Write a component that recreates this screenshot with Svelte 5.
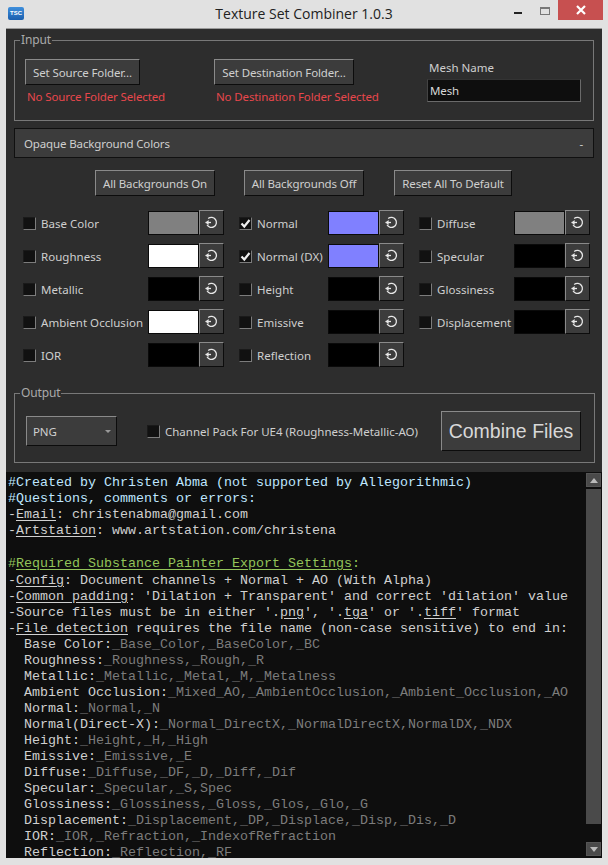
<script>
  const rows = [
    [["Base Color", false, "#808080"], ["Normal", true, "#8080ff"], ["Diffuse", false, "#808080"]],
    [["Roughness", false, "#ffffff"], ["Normal (DX)", true, "#8080ff"], ["Specular", false, "#000000"]],
    [["Metallic", false, "#000000"], ["Height", false, "#000000"], ["Glossiness", false, "#000000"]],
    [["Ambient Occlusion", false, "#ffffff"], ["Emissive", false, "#000000"], ["Displacement", false, "#000000"]],
    [["IOR", false, "#000000"], ["Reflection", false, "#000000"]]
  ];
  const cells = rows.flat();
  const suffixes = [
    ["Base Color:", "_Base_Color,_BaseColor,_BC"],
    ["Roughness:", "_Roughness,_Rough,_R"],
    ["Metallic:", "_Metallic,_Metal,_M,_Metalness"],
    ["Ambient Occlusion:", "_Mixed_AO,_AmbientOcclusion,_Ambient_Occlusion,_AO"],
    ["Normal:", "_Normal,_N"],
    ["Normal(Direct-X):", "_Normal_DirectX,_NormalDirectX,NormalDX,_NDX"],
    ["Height:", "_Height,_H,_High"],
    ["Emissive:", "_Emissive,_E"],
    ["Diffuse:", "_Diffuse,_DF,_D,_Diff,_Dif"],
    ["Specular:", "_Specular,_S,Spec"],
    ["Glossiness:", "_Glossiness,_Gloss,_Glos,_Glo,_G"],
    ["Displacement:", "_Displacement,_DP,_Displace,_Disp,_Dis,_D"],
    ["IOR:", "_IOR,_Refraction,_IndexofRefraction"],
    ["Reflection:", "_Reflection,_RF"]
  ];
</script>

<div class="window">
  <header class="titlebar">
    <div class="appicon">TSC</div>
    <div class="title">Texture Set Combiner 1.0.3</div>
    <div class="controls">
      <span class="min"></span>
      <span class="max"></span>
      <span class="close">
        <svg width="12" height="12" viewBox="0 0 12 12"><path d="M2 2 L10 10 M10 2 L2 10" stroke="#fff" stroke-width="2.2" fill="none"/></svg>
      </span>
    </div>
  </header>

  <main class="client">
    <div class="panel">
      <fieldset class="group input-group">
        <legend>Input</legend>
        <div class="folder source">
          <button class="btn">Set Source Folder...</button>
          <div class="err">No Source Folder Selected</div>
        </div>
        <div class="folder dest">
          <button class="btn">Set Destination Folder...</button>
          <div class="err">No Destination Folder Selected</div>
        </div>
        <div class="mesh">
          <div class="mesh-label">Mesh Name</div>
          <div class="text-input">Mesh</div>
        </div>
      </fieldset>

      <div class="collapse"><span>Opaque Background Colors</span><span>-</span></div>

      <div class="bulk">
        <button class="btn">All Backgrounds On</button>
        <button class="btn">All Backgrounds Off</button>
        <button class="btn">Reset All To Default</button>
      </div>

      <div class="grid">
        {#each cells as c}
          <div class="cell">
            <span class="check">
              {#if c[1]}
                <svg width="11" height="11" viewBox="0 0 11 11"><path d="M1.5 5.5 L4.3 8.5 L9.5 2" stroke="#f0f0f0" stroke-width="2.2" fill="none"/></svg>
              {/if}
            </span>
            <span class="cell-label">{c[0]}</span>
            <span class="swatch" style="background:{c[2]}"></span>
            <span class="reset">
              <svg width="15" height="15" viewBox="0 0 15 15"><path d="M4.2 3.6 A5 5 0 1 1 3 9.8" stroke="#e8e8e8" stroke-width="1.3" fill="none"/><path d="M1.6 7.5 H7" stroke="#e8e8e8" stroke-width="1.3" fill="none"/><path d="M1.4 7.5 L4.6 5 V10 Z" fill="#e8e8e8"/></svg>
            </span>
          </div>
        {/each}
      </div>

      <fieldset class="group output-group">
        <legend>Output</legend>
        <div class="combo"><span>PNG</span><span class="arrow"></span></div>
        <span class="check pack"></span>
        <span class="pack-label">Channel Pack For UE4 (Roughness-Metallic-AO)</span>
        <button class="btn combine">Combine Files</button>
      </fieldset>
    </div>

    <section class="log">
      <div class="log-text">
        <div class="line blue">#Created by Christen Abma (not supported by Allegorithmic)</div>
        <div class="line blue">#Questions, comments or errors:</div>
        <div class="line">-<u>Email</u>: christenabma@gmail.com</div>
        <div class="line">-<u>Artstation</u>: www.artstation.com/christena</div>
        <div class="line">&nbsp;</div>
        <div class="line green">#<u>Required Substance Painter Export Settings</u>:</div>
        <div class="line">-<u>Config</u>: Document channels + Normal + AO (With Alpha)</div>
        <div class="line">-<u>Common padding</u>: 'Dilation + Transparent' and correct 'dilation' value</div>
        <div class="line">-Source files must be in either '.<u>png</u>', '.<u>tga</u>' or '.<u>tiff</u>' format</div>
        <div class="line">-<u>File detection</u> requires the file name (non-case sensitive) to end in:</div>
        {#each suffixes as s}
          <div class="line">&nbsp;&nbsp;{s[0]}<span class="gray">{s[1]}</span></div>
        {/each}
      </div>
      <div class="scrollbar">
        <span class="sb-btn"><i class="up"></i></span>
        <span class="thumb"></span>
        <span class="sb-btn"><i class="down"></i></span>
      </div>
    </section>
  </main>
</div>

<style>
  :global(body) { margin: 0; background: #e0e0e0; }
  .window {
    width: 608px; height: 865px; box-sizing: border-box; overflow: hidden;
    background: #e1e1e1; padding: 0 6px 7px;
    display: flex; flex-direction: column;
    font-family: "Noto Sans", "Open Sans", sans-serif; font-size: 11.5px; letter-spacing: -0.13px; color: #cfcfcf;
  }
  .titlebar { height: 29px; flex: none; display: flex; align-items: flex-start; position: relative; box-sizing: border-box; border-bottom: 1px solid #9a9a9a; }
  .appicon {
    width: 16px; height: 13px; margin: 7px 0 0 2px; border-radius: 2px;
    background: linear-gradient(#3f8fdc, #1a5fae); color: #fff; letter-spacing: 0;
    font: bold 6px "Liberation Sans", sans-serif; line-height: 13px; text-align: center;
  }
  .title {
    position: absolute; left: 0; right: 0; top: 4px; text-align: center;
    font-family: "Open Sans", sans-serif; font-size: 14px; letter-spacing: 0; color: #222; line-height: 20px;
  }
  .controls { margin-left: auto; display: flex; align-items: flex-start; position: relative; }
  .min { width: 8px; height: 2px; background: #222; margin: 12px 18px 0 0; }
  .max { width: 8px; height: 5px; border: 1px solid #777; border-top-width: 2px; margin: 7px 8px 0 0; }
  .close { width: 45px; height: 20px; background: #c75050; display: flex; align-items: center; justify-content: center; margin-right: -1px; }

  .client { flex: 1; min-height: 0; display: flex; flex-direction: column; background: #2d2d2d; }
  .panel { flex: none; height: 443px; box-sizing: border-box; padding: 0 7px 0 8px; display: flex; flex-direction: column; }

  .group { margin: 0; border: 1px solid #787878; box-sizing: border-box; position: relative; padding: 0; display: flex; min-width: 0; }
  legend { padding: 0 1px; margin-left: 5px; font-size: 12px; line-height: 16px; color: #aaa; }

  .input-group { height: 89px; margin-top: 3px; width: 580px; }
  .folder { display: flex; flex-direction: column; align-items: flex-start; margin-top: 11px; }
  .source { margin-left: 10px; width: 189px; }
  .dest { width: 213px; }
  .err { color: #e8474c; line-height: 16px; margin: 4px 0 0 2px; white-space: nowrap; }
  .mesh { display: flex; flex-direction: column; margin-top: 12px; width: 154px; }
  .mesh-label { line-height: 16px; margin: 0 0 3px 2px; color: #cfcfcf; letter-spacing: 0; }
  .text-input {
    height: 23px; box-sizing: border-box; background: #0e0e0e; border: 1px solid #6a6a6a; border-top-color: #333;
    border-left-color: #444; padding-left: 2px; line-height: 21px; color: #d8d8d8;
  }

  .btn {
    font: inherit; letter-spacing: inherit; color: #cfcfcf; background: #3c3c3c; padding: 1px 6px 0;
    height: 26px; box-sizing: border-box; line-height: 22px; white-space: nowrap;
    border: 1px solid; border-color: #8a8a8a #0c0c0c #0c0c0c #8a8a8a;
    display: block;
  }
  .source .btn { width: 115px; }
  .dest .btn { width: 140px; }

  .collapse {
    height: 30px; box-sizing: border-box; margin-top: 7px; width: 580px; background: #3c3c3c; border: 1px solid #101010;
    display: flex; justify-content: space-between; align-items: center; padding: 0 10px 0 9px; color: #cfcfcf;
  }
  .bulk { display: flex; gap: 29px; margin: 12px 0 0 81px; }
  .bulk .btn { width: 120px; padding: 1px 0 0; text-align: center; }
  .bulk .btn:nth-child(3) { margin-left: 1px; width: 118px; }

  .grid { display: grid; grid-template-columns: 201px 165px 171px; column-gap: 15px; grid-auto-rows: 33px; margin: 14px 0 0 9px; }
  .cell { display: flex; align-items: center; height: 25px; }
  .check {
    width: 13px; height: 13px; box-sizing: border-box; flex: none;
    background: #111; border: 1px solid; border-color: #1a1a1a #7c7c7c #7c7c7c #1a1a1a;
    display: flex; align-items: center; justify-content: center;
  }
  .cell .check { margin-top: 2px; }
  .check svg { flex: none; margin: -1px; }
  .cell-label { margin-left: 5px; padding-top: 2px; flex: 1; white-space: nowrap; letter-spacing: 0.03px; }
  .swatch { width: 51px; height: 24px; box-sizing: border-box; border: 1px solid #0a0a0a; flex: none; }
  .reset {
    width: 25px; height: 25px; box-sizing: border-box; flex: none; background: #3c3c3c;
    border: 1px solid; border-color: #8a8a8a #0c0c0c #0c0c0c #8a8a8a;
    display: flex; align-items: center; justify-content: center;
  }

  .output-group { height: 78px; margin-top: auto; margin-bottom: 9px; width: 581px; align-items: center; padding-top: 10px; }
  .combo {
    width: 91px; height: 30px; box-sizing: border-box; margin-left: 11px; background: #3c3c3c;
    border: 1px solid; border-color: #8a8a8a #0c0c0c #0c0c0c #8a8a8a;
    display: flex; align-items: center; justify-content: space-between; padding: 0 5px 0 6px; color: #cfcfcf;
  }
  .arrow { width: 0; height: 0; border: 3px solid transparent; border-top: 3px solid #999; margin-top: 3px; }
  .pack { margin-left: 30px; }
  .pack-label { margin-left: 5px; white-space: nowrap; flex: 1; letter-spacing: 0; }
  .combine {
    width: 140px; height: 40px; margin-right: 13px; padding: 0; text-align: center;
    font-family: "Liberation Sans", Arial, sans-serif; font-size: 19.5px; letter-spacing: 0; line-height: 36px; color: #d8d8d8;
  }

  .log { flex: 1; min-height: 0; background: #0e0e0e; display: flex; overflow: hidden; }
  .log-text {
    flex: 1; min-width: 0; padding: 3px 0 0 2px; overflow: hidden;
    font-family: "Liberation Mono", "Courier New", monospace; font-size: 13.33px; letter-spacing: 0; line-height: 16px; color: #d0d0d0;
  }
  .line { white-space: pre; height: 16px; }
  .blue { color: #bfe6ff; }
  .green { color: #93c45a; height: 18px; line-height: 18px; }
  .gray { color: #7c7c7c; }
  u { text-underline-offset: 2px; }
  .scrollbar { width: 15px; flex: none; display: flex; flex-direction: column; gap: 2px; padding: 1px 0; margin-right: 1px; box-sizing: border-box; }
  .sb-btn { height: 14px; background: #4a4a4a; display: flex; align-items: center; justify-content: center; border: 1px solid #555; box-sizing: border-box; flex: none; }
  .thumb { flex: none; height: 335px; background: #4a4a4a; margin-bottom: 16px; }
  i { width: 0; height: 0; display: block; border-left: 4px solid transparent; border-right: 4px solid transparent; }
  .up { border-bottom: 5px solid #bbb; }
  .down { border-top: 5px solid #bbb; }
</style>
